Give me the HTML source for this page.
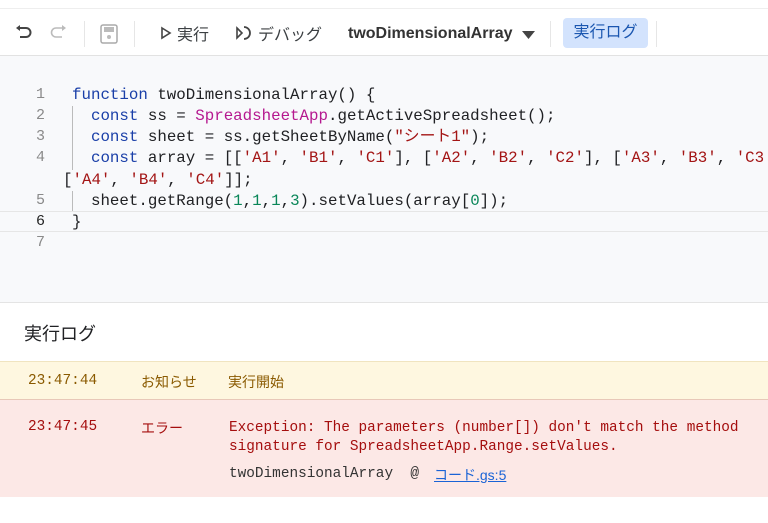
<!DOCTYPE html>
<html><head><meta charset="utf-8"><style>
*{margin:0;padding:0;box-sizing:border-box}
body{width:768px;height:523px;overflow:hidden;background:#fff;font-family:"Liberation Sans","Noto Sans CJK JP",sans-serif;position:relative}
.tb{position:absolute;top:8px;left:0;right:0;height:48px;border-top:1px solid #eee;border-bottom:1px solid #e2e2e2;background:#fff}
.t{position:absolute;top:13px;font-size:16px;color:#3c4043}
.sep{position:absolute;top:12px;width:1px;height:26px;background:#e6e6e6}
.ed{position:absolute;top:56px;left:0;right:0;height:247px;background:#f8f9fb;border-bottom:1px solid #e4e4e4}
.ln{position:absolute;left:0;width:45px;text-align:right;font-family:"Liberation Mono",monospace;font-size:15px;color:#8a8a8a;line-height:20px;height:20px}
.cd{position:absolute;left:72px;font-family:"Liberation Mono","Noto Sans CJK JP",monospace;font-size:15.8px;color:#202124;white-space:pre;line-height:20px;height:20px}
.k{color:#1a3fa8}.m{color:#b5188f}.s{color:#a31515}.n{color:#098658}
.g{position:absolute;left:72px;width:1px;background:#bbb}
.mono{font-family:"Liberation Mono","Noto Sans CJK JP",monospace;font-size:14.4px;white-space:pre;position:absolute}
</style></head><body>
<div class="tb">
<svg style="position:absolute;left:14px;top:15px" width="20" height="18" viewBox="0 0 20 18"><path d="M5 4h7a4.5 4.5 0 0 1 0 9H6" fill="none" stroke="#444" stroke-width="2"/><path d="M2 4l4-3v6z" fill="#444"/></svg>
<svg style="position:absolute;left:48px;top:15px" width="20" height="18" viewBox="0 0 20 18"><path d="M15 4H8a4.5 4.5 0 0 0 0 9h6" fill="none" stroke="#bbb" stroke-width="1.6"/><path d="M18 4l-4-3v6z" fill="#bbb"/></svg>
<div class="sep" style="left:84px"></div>
<svg style="position:absolute;left:100px;top:15px" width="18" height="20" viewBox="0 0 18 20"><rect x="1" y="1" width="16" height="18" rx="2" fill="none" stroke="#aaa" stroke-width="1.5"/><rect x="4" y="3" width="10" height="5" fill="#bbb"/><circle cx="9" cy="13" r="2" fill="#bbb"/></svg>
<div class="sep" style="left:134px"></div>
<svg style="position:absolute;left:160px;top:17px" width="12" height="14" viewBox="0 0 12 14"><path d="M2 2l8 5-8 5z" fill="none" stroke="#444" stroke-width="1.6"/></svg>
<div class="t" style="left:177px;top:12px">実行</div>
<svg style="position:absolute;left:235px;top:15px" width="18" height="18" viewBox="0 0 18 18"><path d="M2 4l5 5-5 5z" fill="none" stroke="#444" stroke-width="1.6"/><path d="M9 3a6 6 0 1 1 0 12" fill="none" stroke="#444" stroke-width="1.8"/></svg>
<div class="t" style="left:258px;top:12px">デバッグ</div>
<div class="t" style="left:348px;top:16px;font-weight:bold;color:#333;letter-spacing:0px">twoDimensionalArray</div>
<svg style="position:absolute;left:522px;top:22px" width="14" height="9"><path d="M0 0h13l-6.5 8z" fill="#444"/></svg>
<div class="sep" style="left:550px"></div>
<div style="position:absolute;left:563px;top:9px;width:85px;height:30px;background:#d3e3fd;border-radius:4px;color:#1a56b0;font-size:16px;line-height:30px;text-align:center">実行ログ</div>
<div class="sep" style="left:656px"></div>
</div>
<div class="ed">
<div class="ln" style="top:29px">1</div><div class="ln" style="top:50px">2</div><div class="ln" style="top:71px">3</div><div class="ln" style="top:92px">4</div><div class="ln" style="top:135px">5</div><div class="ln" style="top:156px;color:#222">6</div><div class="ln" style="top:177px">7</div>
<div class="g" style="top:50px;height:64px"></div><div class="g" style="top:135px;height:20px"></div>
<div style="position:absolute;left:0;right:0;top:155px;height:21px;border-top:1px solid #e6e6e6;border-bottom:1px solid #e6e6e6"></div>
<div class="cd" style="top:29px"><span class="k">function</span> twoDimensionalArray() {</div>
<div class="cd" style="top:50px">  <span class="k">const</span> ss = <span class="m">SpreadsheetApp</span>.getActiveSpreadsheet();</div>
<div class="cd" style="top:71px">  <span class="k">const</span> sheet = ss.getSheetByName(<span class="s">"シート1"</span>);</div>
<div class="cd" style="top:92px">  <span class="k">const</span> array = [[<span class="s">'A1'</span>, <span class="s">'B1'</span>, <span class="s">'C1'</span>], [<span class="s">'A2'</span>, <span class="s">'B2'</span>, <span class="s">'C2'</span>], [<span class="s">'A3'</span>, <span class="s">'B3'</span>, <span class="s">'C3'</span>],</div>
<div class="cd" style="top:114px;left:63px">[<span class="s">'A4'</span>, <span class="s">'B4'</span>, <span class="s">'C4'</span>]];</div>
<div class="cd" style="top:135px">  sheet.getRange(<span class="n">1</span>,<span class="n">1</span>,<span class="n">1</span>,<span class="n">3</span>).setValues(array[<span class="n">0</span>]);</div>
<div class="cd" style="top:156px">}</div>
</div>
<div style="position:absolute;left:24px;top:320px;font-size:18px;color:#202124">実行ログ</div>
<div style="position:absolute;top:361px;left:0;right:0;height:39px;background:#fef7e0;border-top:1px solid #f0e4c0;border-bottom:1px solid #e8c8b8"></div>
<div class="mono" style="left:28px;top:373px;color:#8a5a00">23:47:44</div>
<div style="position:absolute;left:141px;top:372px;font-size:14px;color:#8a5a00">お知らせ</div>
<div style="position:absolute;left:228px;top:372px;font-size:14px;color:#8a5a00">実行開始</div>
<div style="position:absolute;top:400px;left:0;right:0;height:97px;background:#fce8e6"></div>
<div class="mono" style="left:28px;top:419px;color:#a50e0e">23:47:45</div>
<div style="position:absolute;left:141px;top:418px;font-size:14px;color:#a50e0e">エラー</div>
<div class="mono" style="left:229px;top:419px;color:#a50e0e;line-height:19px">Exception: The parameters (number[]) don't match the method
signature for SpreadsheetApp.Range.setValues.</div>
<div class="mono" style="left:229px;top:466px;color:#333">twoDimensionalArray  @</div>
<div style="position:absolute;left:434px;top:465px;font-size:14px;color:#1a63d6;text-decoration:underline">コード.gs:5</div>
</body></html>
